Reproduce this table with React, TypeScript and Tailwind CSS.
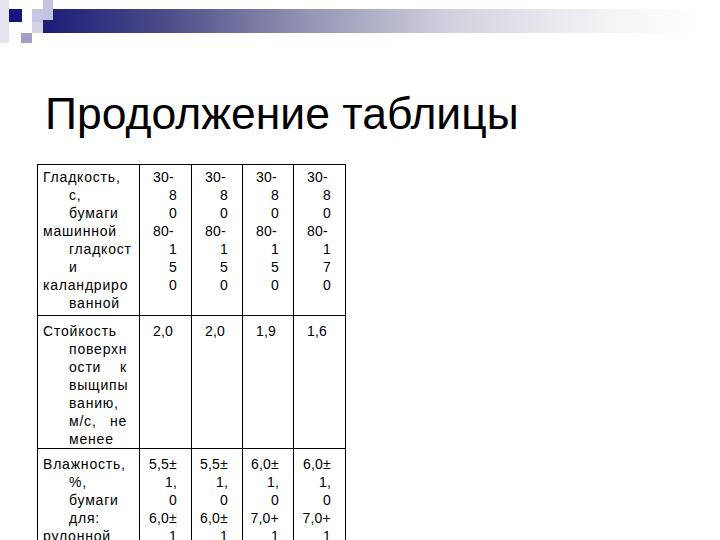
import React from 'react';

type Line = { t: string; indent?: boolean; justify?: boolean };
type DLine = { t: string; r?: boolean };

const firstCol: Line[][] = [
  [
    { t: 'Гладкость,' },
    { t: 'с,', indent: true },
    { t: 'бумаги', indent: true },
    { t: 'машинной' },
    { t: 'гладкост', indent: true },
    { t: 'и', indent: true },
    { t: 'каландриро' },
    { t: 'ванной', indent: true },
  ],
  [
    { t: 'Стойкость' },
    { t: 'поверхн', indent: true },
    { t: 'ости к', indent: true, justify: true },
    { t: 'выщипы', indent: true },
    { t: 'ванию,', indent: true },
    { t: 'м/с, не', indent: true, justify: true },
    { t: 'менее', indent: true },
  ],
  [
    { t: 'Влажность,' },
    { t: '%,', indent: true },
    { t: 'бумаги', indent: true },
    { t: 'для:', indent: true },
    { t: 'рулонной' },
    { t: 'и', indent: true },
    { t: 'листовой', indent: true },
  ],
];

const smooth = (last: string): DLine[] => [
  { t: '30-' },
  { t: '8', r: true },
  { t: '0', r: true },
  { t: '80-' },
  { t: '1', r: true },
  { t: last, r: true },
  { t: '0', r: true },
];

const moist = (a: string, b: string): DLine[] => [
  { t: a, r: true },
  { t: '1,', r: true },
  { t: '0', r: true },
  { t: b, r: true },
  { t: '1', r: true },
  { t: ',0', r: true },
];

const dataRows: DLine[][][] = [
  [smooth('5'), smooth('5'), smooth('5'), smooth('7')],
  [[{ t: '2,0' }], [{ t: '2,0' }], [{ t: '1,9' }], [{ t: '1,6' }]],
  [moist('5,5±', '6,0±'), moist('5,5±', '6,0±'), moist('6,0±', '7,0+'), moist('6,0±', '7,0+')],
];

const rowPad = ['pt-[3px] pb-[3px]', 'pt-[6px] pb-0', 'pt-[6px] pb-0'];

// template decoration: squares + fading bar
const HeaderArt: React.FC = () => (
  <svg width="720" height="45" viewBox="0 0 720 45" className="block">
    <defs>
      <linearGradient id="bar" x1="0" y1="0" x2="1" y2="0">
        <stop offset="0" stopColor="#1c1c78" />
        <stop offset="0.18" stopColor="#4a4a88" />
        <stop offset="0.4" stopColor="#9494b4" />
        <stop offset="0.62" stopColor="#d2d2de" />
        <stop offset="0.85" stopColor="#f3f3f6" />
        <stop offset="1" stopColor="#ffffff" />
      </linearGradient>
    </defs>
    <rect x="0" y="0" width="9" height="43" fill="#e4e4f1" />
    <rect x="9" y="9" width="13" height="13" fill="#15157f" />
    <rect x="43" y="9" width="660" height="24" fill="url(#bar)" />
    <rect x="32" y="9" width="11" height="13" fill="#c6c6e2" />
    <rect x="43" y="0" width="10" height="20" fill="#c4c4e0" />
    <rect x="32" y="22" width="11" height="11" fill="#d2d2e2" />
    <rect x="21" y="33" width="11" height="10" fill="#a0a0cb" />
  </svg>
);

const App: React.FC = () => {
  return (
    <div className="w-[720px] h-[540px] bg-white overflow-hidden font-['Liberation_Sans',Arial,sans-serif] text-black">
      <HeaderArt />

      <h1 className="mt-[47px] pl-[45px] text-[44.5px] leading-[44px] font-normal">
        Продолжение таблицы
      </h1>

      <div className="mt-[28px] ml-[37px] w-[309px] border-t border-l border-black grid grid-cols-[102px_52px_51px_51px_52px] text-[14px] leading-[18px] tracking-[0.8px]">
        {firstCol.map((lines, ri) => (
          <React.Fragment key={ri}>
            <div className={`border-r border-b border-black pl-[5px] pr-[12px] ${rowPad[ri]}`}>
              {lines.map((l, li) =>
                l.justify ? (
                  <div key={li} className="flex justify-between pl-[26px]">
                    {l.t.split(' ').map((w, wi) => (
                      <span key={wi}>{w}</span>
                    ))}
                  </div>
                ) : (
                  <div key={li} className={`whitespace-nowrap ${l.indent ? 'pl-[26px]' : ''}`}>
                    {l.t}
                  </div>
                )
              )}
            </div>
            {dataRows[ri].map((cell, ci) => (
              <div key={ci} className={`flex flex-col border-r border-b border-black pl-[13px] pr-[14px] tracking-[0.2px] ${rowPad[ri]}`}>
                {cell.map((d, di) => (
                  <span key={di} className={`whitespace-nowrap ${d.r ? 'self-end' : 'self-start'}`}>
                    {d.t}
                  </span>
                ))}
              </div>
            ))}
          </React.Fragment>
        ))}
      </div>
    </div>
  );
};

export default App;
